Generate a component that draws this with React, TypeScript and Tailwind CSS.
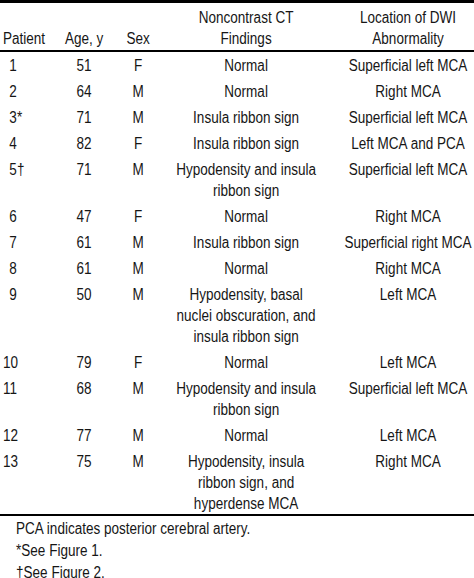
import React from "react";

type Row = {
  n: string;
  sup?: string;
  age: string;
  sex: string;
  ct: string[];
  loc: string;
};

const rows: Row[] = [
  { n: "1", age: "51", sex: "F", ct: ["Normal"], loc: "Superficial left MCA" },
  { n: "2", age: "64", sex: "M", ct: ["Normal"], loc: "Right MCA" },
  { n: "3", sup: "*", age: "71", sex: "M", ct: ["Insula ribbon sign"], loc: "Superficial left MCA" },
  { n: "4", age: "82", sex: "F", ct: ["Insula ribbon sign"], loc: "Left MCA and PCA" },
  { n: "5", sup: "†", age: "71", sex: "M", ct: ["Hypodensity and insula", "ribbon sign"], loc: "Superficial left MCA" },
  { n: "6", age: "47", sex: "F", ct: ["Normal"], loc: "Right MCA" },
  { n: "7", age: "61", sex: "M", ct: ["Insula ribbon sign"], loc: "Superficial right MCA" },
  { n: "8", age: "61", sex: "M", ct: ["Normal"], loc: "Right MCA" },
  { n: "9", age: "50", sex: "M", ct: ["Hypodensity, basal", "nuclei obscuration, and", "insula ribbon sign"], loc: "Left MCA" },
  { n: "10", age: "79", sex: "F", ct: ["Normal"], loc: "Left MCA" },
  { n: "11", age: "68", sex: "M", ct: ["Hypodensity and insula", "ribbon sign"], loc: "Superficial left MCA" },
  { n: "12", age: "77", sex: "M", ct: ["Normal"], loc: "Left MCA" },
  { n: "13", age: "75", sex: "M", ct: ["Hypodensity, insula", "ribbon sign, and", "hyperdense MCA"], loc: "Right MCA" },
];

const grid = "grid grid-cols-[67.5px_64px_64px_191.5px_174px]";

export default function App() {
  return (
    <div className="w-[474px] h-[578px] overflow-hidden bg-white">
      <div
        className="w-[561px] origin-top-left scale-x-[0.845] text-[#161616] text-[16px] leading-[21px]"
        style={{ fontFamily: '"Liberation Sans", Arial, sans-serif' }}
      >
        {/* Header */}
        <div className={`${grid} items-end border-t-[3px] border-b-2 border-black pt-[4px] pb-[0.5px]`}>
          <div className="pl-[3.5px]">Patient</div>
          <div className="text-center">Age, y</div>
          <div className="text-center">Sex</div>
          <div className="text-center">
            Noncontrast CT
            <br />
            Findings
          </div>
          <div className="text-center pl-[17.75px]">
            Location of DWI
            <br />
            Abnormality
          </div>
        </div>

        {/* Body */}
        <div className="border-b-2 border-black pt-[0.5px]">
          {rows.map((r, i) => (
            <div
              key={r.n}
              className={`${grid} items-start pt-[2.5px] ${i === rows.length - 1 ? "pb-0" : "pb-[2.5px]"}`}
            >
              <div className="pl-[3.5px] whitespace-nowrap">
                <span className="inline-block w-[16.5px] text-right">{r.n}</span>
                {r.sup && <span>{r.sup}</span>}
              </div>
              <div className="text-center">{r.age}</div>
              <div className="text-center">{r.sex}</div>
              <div className="text-center whitespace-nowrap">
                {r.ct.map((l, j) => (
                  <div key={j}>{l}</div>
                ))}
              </div>
              <div className="text-center pl-[17.75px] whitespace-nowrap">{r.loc}</div>
            </div>
          ))}
        </div>

        {/* Footnotes */}
        <div className="pl-[19px] pt-[2px] leading-[22px]">
          <div>PCA indicates posterior cerebral artery.</div>
          <div>*See Figure 1.</div>
          <div>†See Figure 2.</div>
        </div>
      </div>
    </div>
  );
}
